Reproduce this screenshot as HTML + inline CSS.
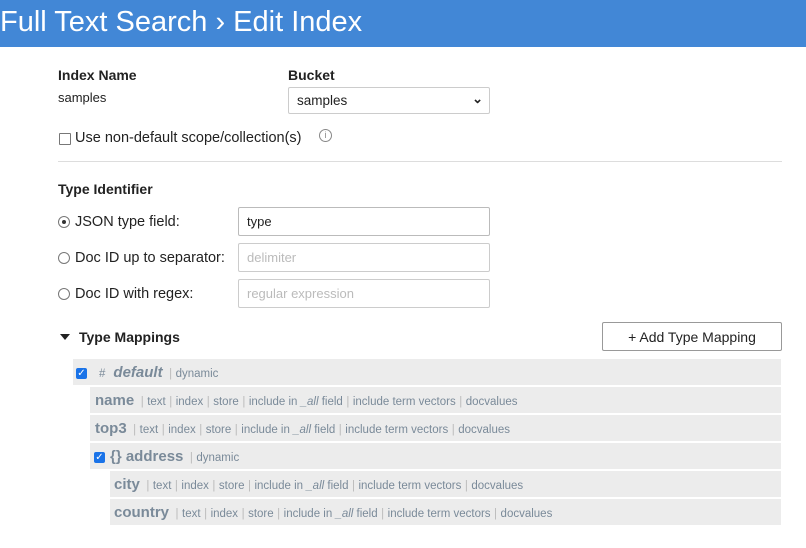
<!DOCTYPE html>
<html><head><style>
body{margin:0;width:806px;height:548px;overflow:hidden;background:#fff;font-family:"Liberation Sans",sans-serif;color:#222;position:relative}
.hdr{position:absolute;left:0;top:0;width:806px;height:47px;background:#4287d6;color:#fff;font-size:29px;line-height:44px;white-space:nowrap}
.a{position:absolute;white-space:nowrap}
.lbl{font-size:14px;font-weight:bold}
.t{font-size:14.5px}
.inp{position:absolute;border:1px solid #ccc;border-radius:2px;height:27px;box-sizing:border-box;font-size:13px;line-height:25px;padding-left:8px}
.ph{color:#bbb}
.rad{position:absolute;width:10px;height:10px;border:1px solid #777;border-radius:50%}
.row{position:absolute;box-sizing:border-box;background:#ececec;border-bottom:2px solid #fff;height:28px;line-height:28px;font-size:11.5px;color:#7a8a99;white-space:nowrap}
.row b{font-size:15px;color:#7a8a99;margin-right:3px}
.row i.s{color:#bbb;font-style:normal;margin:0 3.5px}
.cb{display:inline-block;width:11px;height:11px;background:#1a73e8;border-radius:2px;color:#fff;font-size:10px;line-height:11px;text-align:center;vertical-align:middle;margin-right:6px}
</style></head><body>
<div class="hdr">Full Text Search › Edit Index</div>
<div class="a lbl" style="left:58px;top:67px">Index Name</div>
<div class="a lbl" style="left:288px;top:67px">Bucket</div>
<div class="a t" style="left:58px;top:90px;font-size:13px">samples</div>
<div class="inp" style="left:288px;top:87px;width:202px;font-size:13.5px">samples<span style="position:absolute;right:6px;top:-2px;font-size:13px;font-weight:bold">&#8964;</span></div>
<div class="a" style="left:59px;top:133px;width:10px;height:10px;border:1px solid #777;border-radius:1px"></div>
<div class="a t" style="left:75px;top:130px">Use non-default scope/collection(s)</div>
<div class="a" style="left:319px;top:129px;width:11px;height:11px;border:1px solid #888;border-radius:50%;font-size:9px;line-height:11px;text-align:center;color:#888">i</div>
<div class="a" style="left:58px;top:161px;width:724px;height:1px;background:#ddd"></div>
<div class="a lbl" style="left:58px;top:181px">Type Identifier</div>
<div class="rad" style="left:58px;top:216px"></div><div class="a" style="left:62px;top:220px;width:4px;height:4px;background:#333;border-radius:50%"></div>
<div class="a t" style="left:75px;top:214px">JSON type field:</div>
<div class="rad" style="left:58px;top:252px"></div>
<div class="a t" style="left:75px;top:250px">Doc ID up to separator:</div>
<div class="rad" style="left:58px;top:288px"></div>
<div class="a t" style="left:75px;top:286px">Doc ID with regex:</div>
<div class="inp" style="left:238px;top:207px;width:252px;height:29px;border-color:#bbb;line-height:27px">type</div>
<div class="inp ph" style="left:238px;top:243px;width:252px;height:29px;line-height:27px">delimiter</div>
<div class="inp ph" style="left:238px;top:279px;width:252px;height:29px;line-height:27px">regular expression</div>
<div class="a" style="left:60px;top:334px;width:0;height:0;border-left:5px solid transparent;border-right:5px solid transparent;border-top:6px solid #222"></div>
<div class="a lbl" style="left:79px;top:329px">Type Mappings</div>
<div class="inp" style="left:602px;top:322px;width:180px;height:29px;border-color:#999;text-align:center;padding:0;font-size:14px;line-height:28px">+ Add Type Mapping</div>
<div class="row" style="left:73px;top:359px;width:708px;padding-left:3px"><span class="cb">✓</span><span style="margin:0 8px 0 6px">#</span><b><i>default</i></b><i class="s">|</i>dynamic</div>
<div class="row" style="left:90px;top:387px;width:691px;padding-left:5px"><b>name</b><i class="s">|</i>text<i class="s">|</i>index<i class="s">|</i>store<i class="s">|</i>include in <i>_all</i> field<i class="s">|</i>include term vectors<i class="s">|</i>docvalues</div>
<div class="row" style="left:90px;top:415px;width:691px;padding-left:5px"><b>top3</b><i class="s">|</i>text<i class="s">|</i>index<i class="s">|</i>store<i class="s">|</i>include in <i>_all</i> field<i class="s">|</i>include term vectors<i class="s">|</i>docvalues</div>
<div class="row" style="left:90px;top:443px;width:691px;padding-left:4px"><span class="cb" style="margin-right:5px">✓</span><b>{} address</b><i class="s">|</i>dynamic</div>
<div class="row" style="left:110px;top:471px;width:671px;padding-left:4px"><b>city</b><i class="s">|</i>text<i class="s">|</i>index<i class="s">|</i>store<i class="s">|</i>include in <i>_all</i> field<i class="s">|</i>include term vectors<i class="s">|</i>docvalues</div>
<div class="row" style="left:110px;top:499px;width:671px;padding-left:4px"><b>country</b><i class="s">|</i>text<i class="s">|</i>index<i class="s">|</i>store<i class="s">|</i>include in <i>_all</i> field<i class="s">|</i>include term vectors<i class="s">|</i>docvalues</div>
</body></html>
